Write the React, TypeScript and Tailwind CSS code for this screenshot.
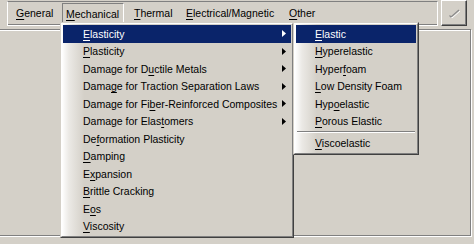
import React from 'react';

type Item = { label: string; u: number; arrow?: boolean; active?: boolean; sep?: boolean };

const tabs: { label: string; u: number; w: string; pressed?: boolean }[] = [
  { label: 'General', u: 0, w: 'w-[50px] pl-[4px]' },
  { label: 'Mechanical', u: 0, w: 'w-[62px] pl-[3px]', pressed: true },
  { label: 'Thermal', u: 0, w: 'w-[52px] ml-[6px] pl-[4px]' },
  { label: 'Electrical/Magnetic', u: 0, w: 'w-[103px] pl-[4px]' },
  { label: 'Other', u: 0, w: 'w-[40px] pl-[4px]' },
];

const mainItems: Item[] = [
  { label: 'Elasticity', u: 0, arrow: true, active: true },
  { label: 'Plasticity', u: 0, arrow: true },
  { label: 'Damage for Ductile Metals', u: 12, arrow: true },
  { label: 'Damage for Traction Separation Laws', u: 4, arrow: true },
  { label: 'Damage for Fiber-Reinforced Composites', u: 13, arrow: true },
  { label: 'Damage for Elastomers', u: 15, arrow: true },
  { label: 'Deformation Plasticity', u: 2 },
  { label: 'Damping', u: 0 },
  { label: 'Expansion', u: 1 },
  { label: 'Brittle Cracking', u: 0 },
  { label: 'Eos', u: 1 },
  { label: 'Viscosity', u: 0 },
];

const subItems: Item[] = [
  { label: 'Elastic', u: 0, active: true },
  { label: 'Hyperelastic', u: 0 },
  { label: 'Hyperfoam', u: 5 },
  { label: 'Low Density Foam', u: 0 },
  { label: 'Hypoelastic', u: 3 },
  { label: 'Porous Elastic', u: 0 },
  { label: '', u: 0, sep: true },
  { label: 'Viscoelastic', u: 0 },
];

function Label({ label, u }: { label: string; u: number }) {
  return (
    <span className="whitespace-nowrap">
      {label.slice(0, u)}
      <span className="underline decoration-1 underline-offset-[2px]">{label[u]}</span>
      {label.slice(u + 1)}
    </span>
  );
}

function Arrow() {
  return (
    <svg width="4" height="7" viewBox="0 0 4 7" className="shrink-0">
      <polygon points="0,0 4,3.5 0,7" fill="currentColor" />
    </svg>
  );
}

function Menu({ items, className, pad }: { items: Item[]; className: string; pad: string }) {
  return (
    <div
      className={`absolute border-l border-t border-l-[#d4d0c8] border-t-[#d4d0c8] border-r border-b border-r-[#404040] border-b-[#404040] ${className}`}
    >
      <div className="border-l border-t border-white border-r border-b border-r-[#808080] border-b-[#808080] p-[1px] bg-[linear-gradient(to_right,#ffffff,#ebe9e5_7px,#d4d0c8_22px)]">
        {items.map((it, i) =>
          it.sep ? (
            <div key={i} className="h-[4px] flex flex-col justify-center px-[1px]">
              <div className="h-px bg-[#808080]" />
              <div className="h-px bg-white" />
            </div>
          ) : (
            <div
              key={i}
              className={`h-[17.5px] flex items-center justify-between pr-[5px] ${pad} ${
                it.active ? 'bg-[#0a246a] text-white' : 'text-black'
              }`}
            >
              <Label label={it.label} u={it.u} />
              {it.arrow && <Arrow />}
            </div>
          )
        )}
      </div>
    </div>
  );
}

export default function App() {
  return (
    <div
      className="relative w-[474px] h-[244px] overflow-hidden bg-[#d4d0c8] text-[10.5px] leading-none text-black"
      style={{ fontFamily: '"Liberation Sans", Arial, sans-serif' }}
    >
      {/* toolbar */}
      <div className="flex items-start pl-[7px] pt-[1px]">
        <div className="w-[431px] h-[25px] flex items-center pl-[4px] border-l border-t border-l-white border-t-[#808080] border-b border-b-white border-r border-r-white shadow-[inset_0_-1px_0_#808080]">
          {tabs.map((t) => (
            <div
              key={t.label}
              className={`${t.w} h-[21px] flex items-center ${
                t.pressed ? 'border-l border-t border-[#808080] border-r border-r-white' : ''
              }`}
            >
              <Label label={t.label} u={t.u} />
            </div>
          ))}
        </div>
        <div className="ml-[3px] -mt-[1px] w-[26px] h-[26px] border-l border-t border-white border-r border-b border-r-[#404040] border-b-[#404040]">
          <div className="w-full h-full border-r border-b border-[#808080] flex items-center justify-center">
            <svg width="14" height="12" viewBox="0 0 14 12">
              <polyline points="2.5,8.5 4,10 12,3" fill="none" stroke="#ffffff" strokeWidth="1" transform="translate(1,1)" />
              <polyline points="2.5,8.5 4,10 12,3" fill="none" stroke="#8a8a8a" strokeWidth="1.2" />
            </svg>
          </div>
        </div>
      </div>

      {/* panel behind menus */}
      <div className="-ml-[2px] mt-[3px] mr-[3px] h-[207px] border-t border-r border-b border-[#808080] shadow-[inset_1px_1px_0_#fff,1px_1px_0_#fff]" />

      <Menu items={mainItems} className="left-[60px] top-[22px] w-[234px]" pad="pl-[20px]" />
      <Menu items={subItems} className="left-[293px] top-[22px] w-[126px]" pad="pl-[19px]" />
    </div>
  );
}
